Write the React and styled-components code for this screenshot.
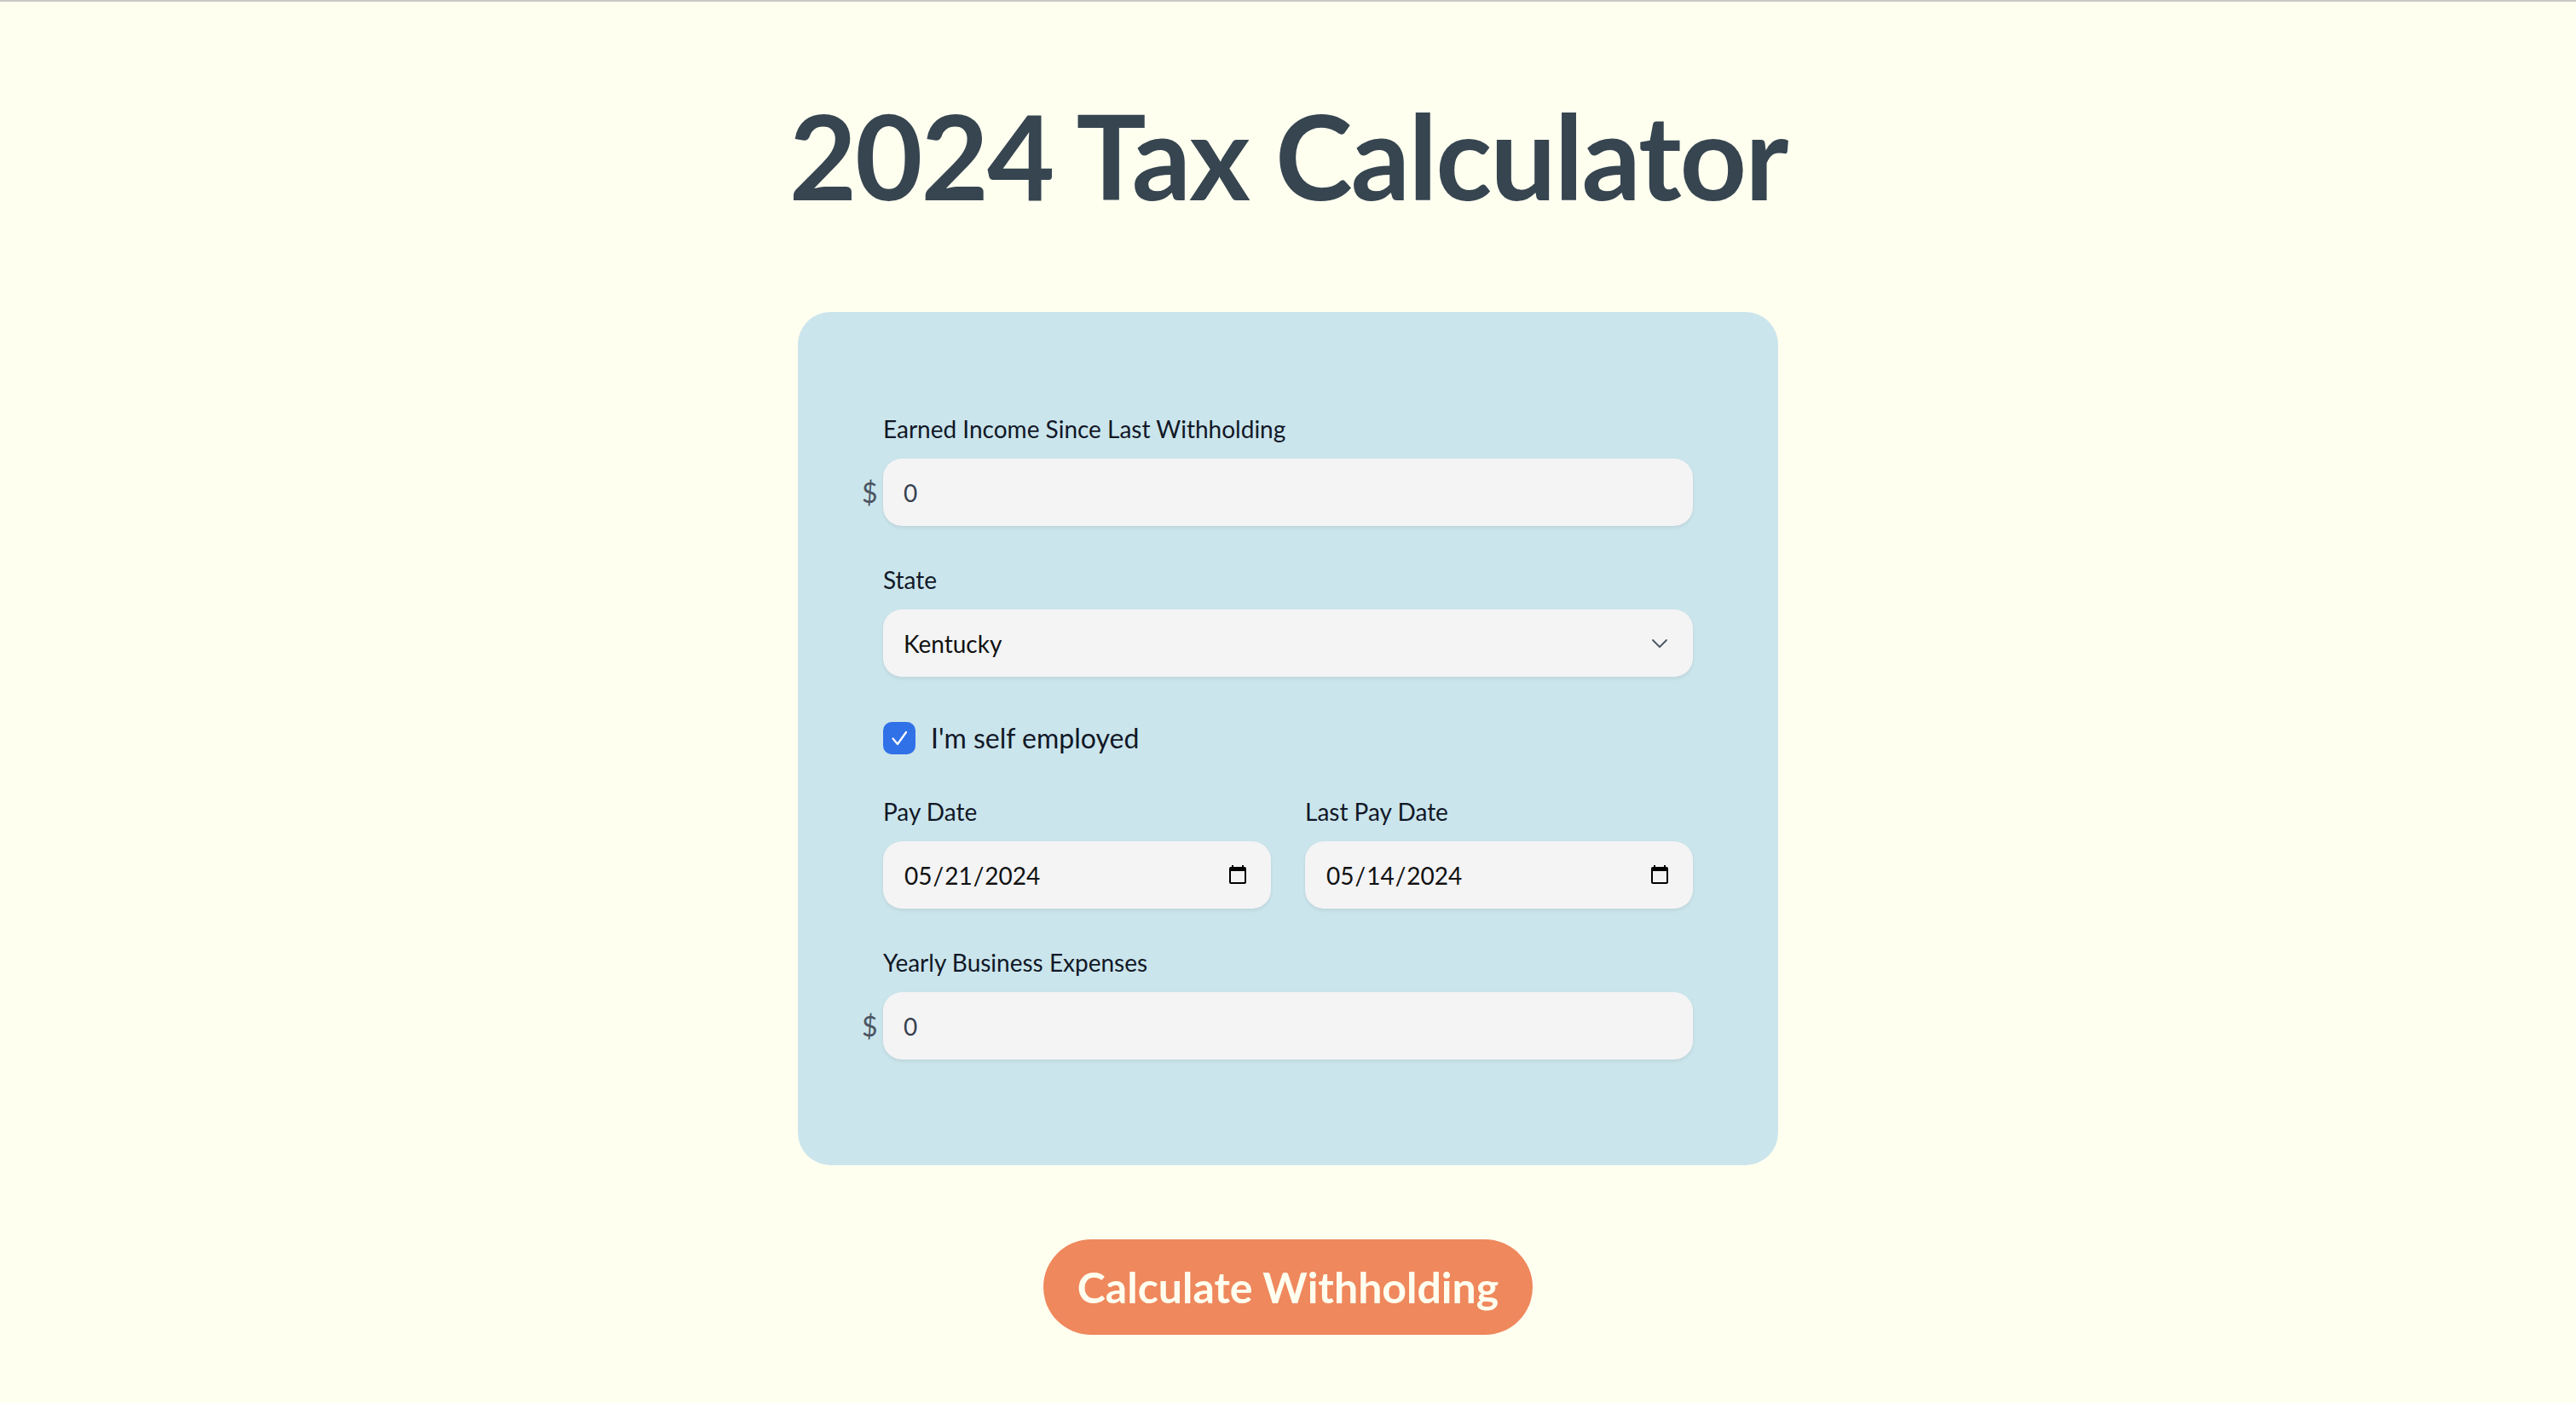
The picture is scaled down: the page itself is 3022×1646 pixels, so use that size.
import React, { useState } from 'react';
import styled, { createGlobalStyle } from 'styled-components';

const GlobalStyle = createGlobalStyle`
  html, body {
    margin: 0;
    padding: 0;
    background-color: #fffff0;
    font-family: 'Lato', 'Noto Sans', sans-serif;
  }
  * { box-sizing: border-box; }
`;

const App = () => {
  const [income, setIncome] = useState('0');
  const [state, setState] = useState('Kentucky');
  const [selfEmployed, setSelfEmployed] = useState(true);
  const [payDate, setPayDate] = useState('2024-05-21');
  const [lastPayDate, setLastPayDate] = useState('2024-05-14');
  const [expenses, setExpenses] = useState('0');

  return (
    <>
      <GlobalStyle />
      <Page>
        <Title>2024 Tax Calculator</Title>
        <Card>
          <Field>
            <Label>Earned Income Since Last Withholding</Label>
            <InputRow>
              <Prefix>$</Prefix>
              <TextInput value={income} onChange={(e) => setIncome(e.target.value)} />
            </InputRow>
          </Field>

          <Field>
            <Label>State</Label>
            <SelectWrap>
              <Select value={state} onChange={(e) => setState(e.target.value)}>
                <option>Kentucky</option>
                <option>Ohio</option>
                <option>Indiana</option>
                <option>Tennessee</option>
              </Select>
              <Chevron width="20" height="12" viewBox="0 0 20 12" fill="none">
                <path d="M2 2l8 8 8-8" stroke="#4b5563" strokeWidth="1.8" strokeLinecap="round" strokeLinejoin="round" />
              </Chevron>
            </SelectWrap>
          </Field>

          {/* custom checkbox, native one is too small */}
          <CheckRow onClick={() => setSelfEmployed(!selfEmployed)}>
            <CheckBox checked={selfEmployed}>
              {selfEmployed && (
                <svg width="38" height="38" viewBox="0 0 38 38" fill="none">
                  <path d="M11.5 19.5l5.5 6.5 10-14" stroke="#fff" strokeWidth="2.2" strokeLinecap="round" strokeLinejoin="round" />
                </svg>
              )}
            </CheckBox>
            <CheckText>I'm self employed</CheckText>
          </CheckRow>

          <DateGrid>
            <Field>
              <Label>Pay Date</Label>
              <DateInput type="date" value={payDate} onChange={(e) => setPayDate(e.target.value)} />
            </Field>
            <Field>
              <Label>Last Pay Date</Label>
              <DateInput type="date" value={lastPayDate} onChange={(e) => setLastPayDate(e.target.value)} />
            </Field>
          </DateGrid>

          <Field>
            <Label>Yearly Business Expenses</Label>
            <InputRow>
              <Prefix>$</Prefix>
              <TextInput value={expenses} onChange={(e) => setExpenses(e.target.value)} />
            </InputRow>
          </Field>
        </Card>
        <Button>Calculate Withholding</Button>
      </Page>
    </>
  );
};

const Page = styled.div`
  display: flex;
  flex-direction: column;
  align-items: center;
  min-height: 100vh;
  border-top: 2px solid #c9c9c4;
  background-color: #fffff0;
`

const Title = styled.h1`
  margin: 98px 0 0;
  font-size: 137px;
  font-weight: 700;
  line-height: 1.2;
  letter-spacing: -2px;
  color: #36454f;
`

const Card = styled.div`
  display: flex;
  flex-direction: column;
  gap: 46px;
  width: 1150px;
  margin-top: 102px;
  padding: 120px 100px 124px;
  background-color: #cbe5ec;
  border-radius: 38px;
`

const Field = styled.div`
  display: flex;
  flex-direction: column;
  min-width: 0;
`

const Label = styled.label`
  font-size: 28px;
  line-height: 34px;
  color: #111827;
  margin-bottom: 18px;
`

const InputRow = styled.div`
  display: flex;
  align-items: center;
`

const Prefix = styled.span`
  width: 25px;
  margin-left: -25px;
  font-size: 32px;
  color: #4b5563;
`

const fieldBase = `
  width: 100%;
  height: 79px;
  border: none;
  outline: none;
  border-radius: 22px;
  background-color: #f4f4f5;
  box-shadow: 0 2px 4px rgba(0, 0, 0, 0.08);
  font-family: 'Lato', 'Noto Sans', sans-serif;
  font-size: 28px;
`

const TextInput = styled.input`
  ${fieldBase}
  padding: 0 24px;
  color: #374151;
`

const SelectWrap = styled.div`
  position: relative;
`

const Select = styled.select`
  ${fieldBase}
  appearance: none;
  padding: 0 24px;
  color: #111;
`

const Chevron = styled.svg`
  position: absolute;
  right: 29px;
  top: 34px;
  pointer-events: none;
`

const CheckRow = styled.div`
  display: flex;
  align-items: center;
  gap: 18px;
  margin: 6px 0 4px;
  cursor: pointer;
`

const CheckBox = styled.span`
  display: flex;
  align-items: center;
  justify-content: center;
  width: 38px;
  height: 38px;
  border-radius: 10px;
  background-color: ${(p) => (p.checked ? '#3171e8' : '#fff')};
  border: ${(p) => (p.checked ? 'none' : '2px solid #9ca3af')};
`

const CheckText = styled.span`
  font-size: 32px;
  color: #111827;
`

const DateGrid = styled.div`
  display: grid;
  grid-template-columns: 1fr 1fr;
  column-gap: 40px;
`

const DateInput = styled.input`
  ${fieldBase}
  padding: 0 24px;
  color: #111;
  &::-webkit-calendar-picker-indicator {
    width: 26px;
    height: 26px;
  }
`

const Button = styled.button`
  margin-top: 87px;
  height: 112px;
  padding: 0 40px;
  border: none;
  border-radius: 56px;
  background-color: #ef885d;
  color: #fffff0;
  font-family: 'Lato', 'Noto Sans', sans-serif;
  font-size: 50px;
  font-weight: 700;
  cursor: pointer;
`

export default App;
